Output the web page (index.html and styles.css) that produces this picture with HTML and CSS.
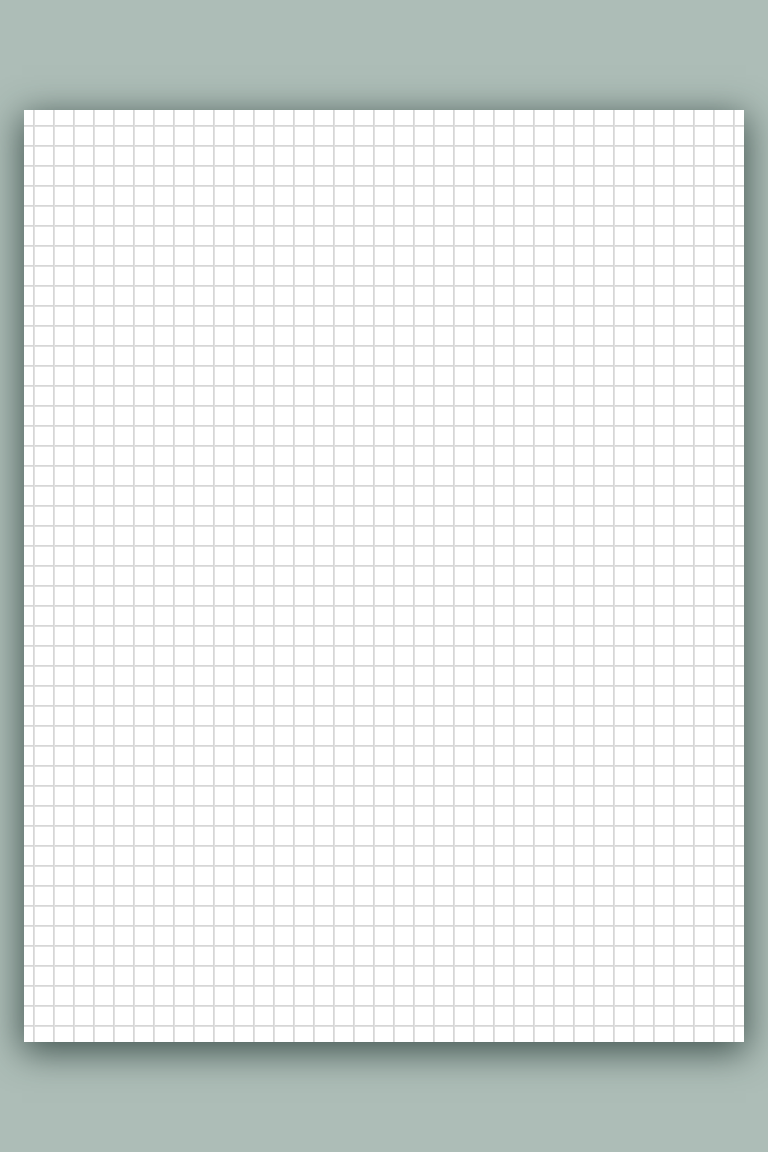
FILE: index.html
```html
<!DOCTYPE html>
<html>
<head>
    <link rel="stylesheet" href="styles.css">
</head>
<body>
    <div class="sheet"></div>
</body>
</html>
```

FILE: styles.css
```css
body {
    margin: 0;
    height: 100vh;
    background-color: #adbdb7;
    display: flex;
    justify-content: center;
    align-items: center;
    overflow: hidden;
}
.sheet {
    width: 720px;
    height: 932px;
    background-color: #ffffff;
    background-image:
        linear-gradient(to right, #d6d6d6 1px, #e0e0e0 1px, #e0e0e0 2px, transparent 2px),
        linear-gradient(to bottom, #d6d6d6 1px, #e0e0e0 1px, #e0e0e0 2px, transparent 2px);
    background-size: 20px 20px;
    background-position: 9px 15px;
    box-shadow: 0 8px 34px 2px rgba(30, 50, 45, 0.75);
}
```
